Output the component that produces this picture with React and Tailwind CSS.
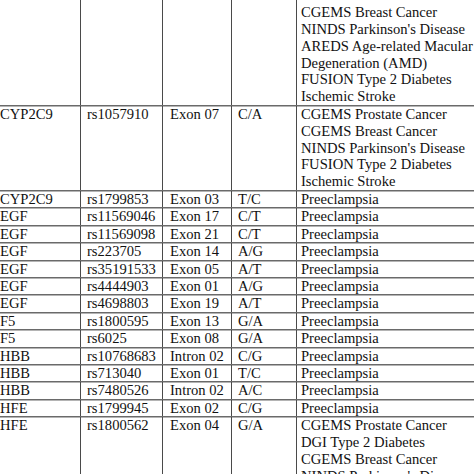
import React from 'react'

// Tabla de variantes genéticas (recorte de una tabla más larga)
const rows = [
  {
    gene: 'CYP2C9',
    snp: 'rs4917639',
    loc: 'Exon 02',
    allele: 'C/T',
    traits: [
      'CGEMS Prostate Cancer',
      'CGEMS Breast Cancer',
      "NINDS Parkinson's Disease",
      'AREDS Age-related Macular',
      'Degeneration (AMD)',
      'FUSION Type 2 Diabetes',
      'Ischemic Stroke',
    ],
  },
  {
    gene: 'CYP2C9',
    snp: 'rs1057910',
    loc: 'Exon 07',
    allele: 'C/A',
    traits: [
      'CGEMS Prostate Cancer',
      'CGEMS Breast Cancer',
      "NINDS Parkinson's Disease",
      'FUSION Type 2 Diabetes',
      'Ischemic Stroke',
    ],
  },
  { gene: 'CYP2C9', snp: 'rs1799853', loc: 'Exon 03', allele: 'T/C', traits: ['Preeclampsia'] },
  { gene: 'EGF', snp: 'rs11569046', loc: 'Exon 17', allele: 'C/T', traits: ['Preeclampsia'] },
  { gene: 'EGF', snp: 'rs11569098', loc: 'Exon 21', allele: 'C/T', traits: ['Preeclampsia'] },
  { gene: 'EGF', snp: 'rs223705', loc: 'Exon 14', allele: 'A/G', traits: ['Preeclampsia'] },
  { gene: 'EGF', snp: 'rs35191533', loc: 'Exon 05', allele: 'A/T', traits: ['Preeclampsia'] },
  { gene: 'EGF', snp: 'rs4444903', loc: 'Exon 01', allele: 'A/G', traits: ['Preeclampsia'] },
  { gene: 'EGF', snp: 'rs4698803', loc: 'Exon 19', allele: 'A/T', traits: ['Preeclampsia'] },
  { gene: 'F5', snp: 'rs1800595', loc: 'Exon 13', allele: 'G/A', traits: ['Preeclampsia'] },
  { gene: 'F5', snp: 'rs6025', loc: 'Exon 08', allele: 'G/A', traits: ['Preeclampsia'] },
  { gene: 'HBB', snp: 'rs10768683', loc: 'Intron 02', allele: 'C/G', traits: ['Preeclampsia'] },
  { gene: 'HBB', snp: 'rs713040', loc: 'Exon 01', allele: 'T/C', traits: ['Preeclampsia'] },
  { gene: 'HBB', snp: 'rs7480526', loc: 'Intron 02', allele: 'A/C', traits: ['Preeclampsia'] },
  { gene: 'HFE', snp: 'rs1799945', loc: 'Exon 02', allele: 'C/G', traits: ['Preeclampsia'] },
  {
    gene: 'HFE',
    snp: 'rs1800562',
    loc: 'Exon 04',
    allele: 'G/A',
    traits: [
      'CGEMS Prostate Cancer',
      'DGI Type 2 Diabetes',
      'CGEMS Breast Cancer',
      "NINDS Parkinson's Disease",
      'FUSION Type 2 Diabetes',
    ],
  },
]

const cell = 'border-r border-[#4a4a4a] whitespace-nowrap'

const VariantRow = ({ row }) => (
  <div className="grid grid-cols-[86px_82px_69px_65px_1fr] border-t border-[#6a6a6a] shadow-[inset_0_1px_0_#b4b4b4]">
    <div className={`${cell} pl-[5px]`}>{row.gene}</div>
    <div className={`${cell} pl-[6px]`}>{row.snp}</div>
    <div className={`${cell} pl-[7px]`}>{row.loc}</div>
    <div className={`${cell} pl-[6px]`}>{row.allele}</div>
    <div className={`pl-[4px] whitespace-nowrap ${row.traits.length > 1 ? 'leading-[16.8px]' : ''}`}>
      {row.traits.map((t, i) => (
        <div key={i}>{t}</div>
      ))}
    </div>
  </div>
)

export default function App() {
  return (
    <div className="w-[474px] h-[474px] overflow-hidden bg-white">
      <div
        className="-ml-[5px] -mt-[13.6px] w-[484px] text-[14.6px] leading-[16.4px] text-[#111]"
        style={{ fontFamily: '"Liberation Serif", "Times New Roman", serif' }}
      >
        {rows.map((row, i) => (
          <VariantRow key={i} row={row} />
        ))}
      </div>
    </div>
  )
}
